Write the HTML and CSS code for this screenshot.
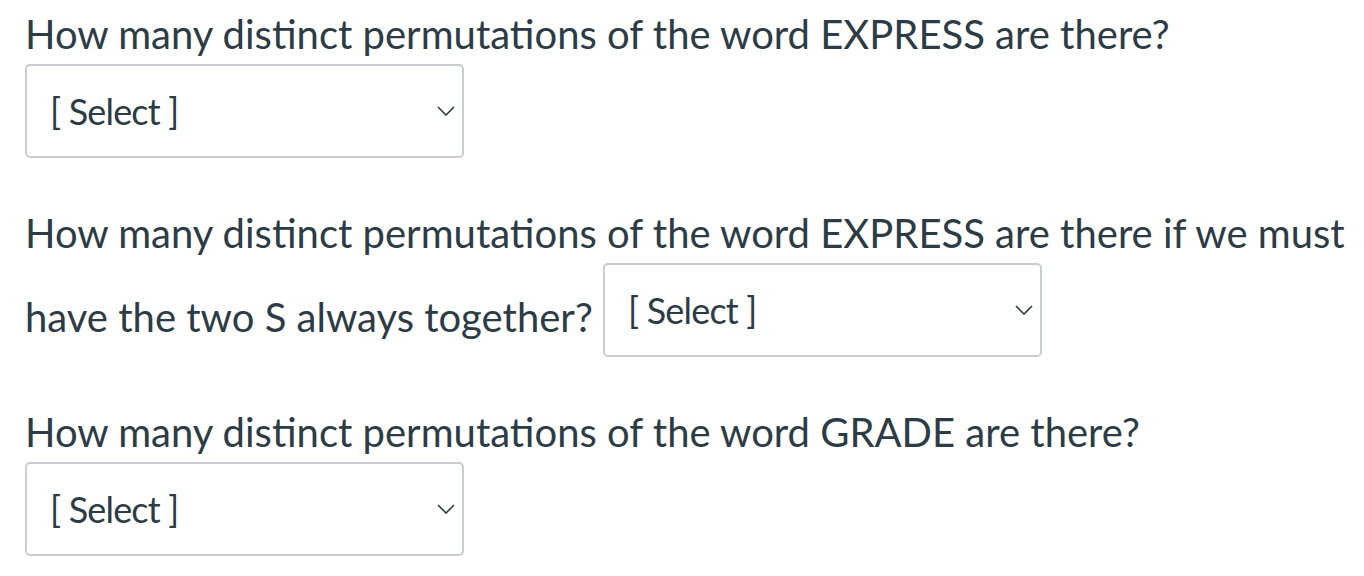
FILE: index.html
```html
<!DOCTYPE html>
<html lang="en">

<head>
    <meta charset="UTF-8">
    <title>Quiz Questions</title>
    <link rel="stylesheet" href="styles.css">
</head>

<body>
    <div class="question">
        How many distinct permutations of the word EXPRESS are there?
        <span class="selectWrap">
            <select class="answerSelect">
                <option>[ Select ]</option>
                <option>5040</option>
                <option>2520</option>
                <option>1260</option>
            </select>
            <svg class="chevron" viewBox="0 0 18 10" width="18" height="10"><path d="M1 1 L9 9 L17 1" fill="none" stroke="#2d3b45" stroke-width="1.6"/></svg>
        </span>
    </div>

    <div class="question">
        How many distinct permutations of the word EXPRESS are there if we must have the two S always together?
        <span class="selectWrap">
            <select class="answerSelect">
                <option>[ Select ]</option>
                <option>720</option>
                <option>360</option>
                <option>120</option>
            </select>
            <svg class="chevron" viewBox="0 0 18 10" width="18" height="10"><path d="M1 1 L9 9 L17 1" fill="none" stroke="#2d3b45" stroke-width="1.6"/></svg>
        </span>
    </div>

    <div class="question">
        How many distinct permutations of the word GRADE are there?
        <span class="selectWrap">
            <select class="answerSelect">
                <option>[ Select ]</option>
                <option>120</option>
                <option>60</option>
                <option>24</option>
            </select>
            <svg class="chevron" viewBox="0 0 18 10" width="18" height="10"><path d="M1 1 L9 9 L17 1" fill="none" stroke="#2d3b45" stroke-width="1.6"/></svg>
        </span>
    </div>
</body>

</html>
```

FILE: styles.css
```css
body {
    font-family: Lato, "Open Sans", sans-serif;
    margin: 0;
    padding: 5px 10px 0 25px;
    background-color: #fff;
    color: #2d3b45;
}

.question {
    font-size: 40px;
    line-height: 59px;
    margin-bottom: 46px;
}

.question:last-child {
    margin-bottom: 0;
}

.selectWrap {
    position: relative;
    display: inline-block;
    vertical-align: 8px;
    line-height: normal;
}

.answerSelect {
    appearance: none;
    -webkit-appearance: none;
    display: block;
    width: 439px;
    height: 94px;
    padding: 0 40px 0 23px;
    font-family: Lato, "Open Sans", sans-serif;
    font-size: 36px;
    letter-spacing: -0.8px;
    color: #2d3b45;
    background-color: #fff;
    border: 2px solid #c7cdd1;
    border-radius: 5px;
    cursor: pointer;
}

.chevron {
    position: absolute;
    right: 9px;
    top: 42px;
    pointer-events: none;
}
```
